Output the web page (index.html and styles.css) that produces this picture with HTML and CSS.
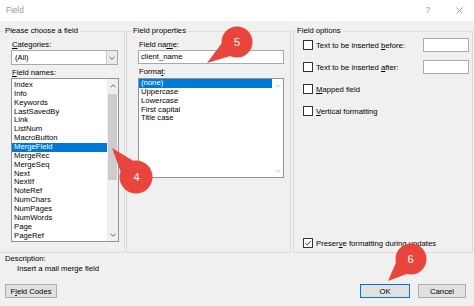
FILE: index.html
```html
<!DOCTYPE html>
<html>
<head>
<meta charset="utf-8">
<link rel="stylesheet" href="styles.css">
</head>
<body>
<div class="dialog">
  <div class="titlebar">
    <span class="title">Field</span>
    <span class="help">?</span>
    <span class="close"><svg width="7" height="7" viewBox="0 0 7 7"><path d="M0.5 0.5L6.5 6.5M6.5 0.5L0.5 6.5" stroke="#8a8a8a" stroke-width="0.8" fill="none"/></svg></span>
  </div>

  <div class="groups">
    <fieldset class="group g-left">
      <legend>Please choose a field</legend>
      <div class="label"><u>C</u>ategories:</div>
      <div class="combo">
        <span class="combo-text">(All)</span>
        <span class="combo-btn"><svg width="6" height="4" viewBox="0 0 6 4"><path d="M0.5 0.8L3 3.2L5.5 0.8" stroke="#555" stroke-width="0.9" fill="none"/></svg></span>
      </div>
      <div class="label gap-label"><u>F</u>ield names:</div>
      <div class="listbox names">
        <ul class="items pad">
          <li>Index</li>
          <li>Info</li>
          <li>Keywords</li>
          <li>LastSavedBy</li>
          <li>Link</li>
          <li>ListNum</li>
          <li>MacroButton</li>
          <li class="sel">MergeField</li>
          <li>MergeRec</li>
          <li>MergeSeq</li>
          <li>Next</li>
          <li>NextIf</li>
          <li>NoteRef</li>
          <li>NumChars</li>
          <li>NumPages</li>
          <li>NumWords</li>
          <li>Page</li>
          <li>PageRef</li>
        </ul>
        <div class="vscroll">
          <span class="arr"><svg width="6" height="4" viewBox="0 0 6 4"><path d="M0.5 3.2L3 0.8L5.5 3.2" stroke="#555" stroke-width="0.9" fill="none"/></svg></span>
          <span class="thumb"></span>
          <span class="spacer"></span>
          <span class="arr"><svg width="6" height="4" viewBox="0 0 6 4"><path d="M0.5 0.8L3 3.2L5.5 0.8" stroke="#555" stroke-width="0.9" fill="none"/></svg></span>
        </div>
      </div>
    </fieldset>

    <fieldset class="group g-mid">
      <legend>Field properties</legend>
      <div class="label">Field na<u>m</u>e:</div>
      <div class="textbox">client_name</div>
      <div class="label gap-label">Forma<u>t</u>:</div>
      <div class="listbox formats">
        <ul class="items">
          <li class="sel">(none)</li>
          <li>Uppercase</li>
          <li>Lowercase</li>
          <li>First capital</li>
          <li>Title case</li>
        </ul>
        <div class="vscroll light">
          <span class="arr"><svg width="6" height="4" viewBox="0 0 6 4"><path d="M0.5 3.2L3 0.8L5.5 3.2" stroke="#bcbcbc" stroke-width="0.9" fill="none"/></svg></span>
          <span class="spacer"></span>
          <span class="arr"><svg width="6" height="4" viewBox="0 0 6 4"><path d="M0.5 0.8L3 3.2L5.5 0.8" stroke="#bcbcbc" stroke-width="0.9" fill="none"/></svg></span>
        </div>
      </div>
    </fieldset>

    <fieldset class="group g-right">
      <legend>Field options</legend>
      <div class="opts">
        <div class="opt"><span class="cb"></span><span>Text to be inserted <u>b</u>efore:</span><span class="tb"></span></div>
        <div class="opt"><span class="cb"></span><span>Text to be inserted <u>a</u>fter:</span><span class="tb"></span></div>
        <div class="opt"><span class="cb"></span><span><u>M</u>apped field</span></div>
        <div class="opt"><span class="cb"></span><span><u>V</u>ertical formatting</span></div>
        <div class="opt last"><span class="cb"><svg width="8" height="8" viewBox="0 0 8 8"><path d="M1.3 4.2L3.2 6L6.8 1.8" stroke="#333" stroke-width="0.9" fill="none"/></svg></span><span>Preser<u>v</u>e formatting during updates</span></div>
      </div>
    </fieldset>
  </div>

  <div class="desc">Description:</div>
  <div class="desc-text">Insert a mail merge field</div>

  <div class="footer">
    <div class="btn codes">F<u>i</u>eld Codes</div>
    <div class="btn ok">OK</div>
    <div class="btn cancel">Cancel</div>
  </div>

  <svg class="callouts" width="474" height="306" viewBox="0 0 474 306">
    <g fill="#e8463d">
      <path d="M120.5 171.2L112 148L133.2 160.7Z"/>
      <circle cx="136" cy="177" r="16.5"/>
      <path d="M230.4 56L207 63L221.6 43.4Z"/>
      <circle cx="237" cy="42" r="15.5"/>
      <path d="M406.6 273.9L388 281L395.9 262.7Z"/>
      <circle cx="411" cy="259" r="15.5"/>
    </g>
    <g fill="#fff" font-family="Liberation Sans, Arial, sans-serif" font-size="11" text-anchor="middle">
      <text x="136.5" y="181">4</text>
      <text x="237" y="46">5</text>
      <text x="410.5" y="263">6</text>
    </g>
  </svg>
</div>
</body>
</html>
```

FILE: styles.css
```css
html, body {
  margin: 0;
  padding: 0;
}

body {
  width: 474px;
  height: 306px;
  overflow: hidden;
  background: #f0f0f0;
  font-family: "Liberation Sans", Arial, sans-serif;
  font-size: 7.7px;
  color: #000;
}

.dialog {
  position: relative;
  height: 306px;
  display: flex;
  flex-direction: column;
}

.titlebar {
  height: 21px;
  background: #fff;
  display: flex;
  align-items: center;
  color: #9a9a9a;
  font-size: 8.2px;
}

.title {
  margin-left: 6px;
}

.help {
  margin-left: auto;
}

.close {
  display: flex;
  margin-left: 26px;
  margin-right: 11px;
}

.groups {
  display: flex;
  padding-top: 5px;
}

.group {
  margin: 0;
  min-width: 0;
  box-sizing: border-box;
  height: 227px;
  border: 1px solid #dcdcdc;
  padding: 4px 0 0 11px;
}

.group legend {
  padding: 0 2px;
  height: 10px;
  line-height: 10px;
}

.g-left {
  width: 125px;
  border-left: none;
}

.g-left legend {
  margin-left: -8px;
}

.g-mid {
  width: 165px;
  margin-left: 1px;
}

.g-mid legend {
  margin-left: -7px;
}

.g-right {
  width: 180px;
  margin-left: 2px;
  padding: 0 3px 0 9px;
}

.g-right legend {
  margin-left: -8px;
}

.label {
  line-height: 10px;
  height: 10px;
  padding-left: 1px;
}

.gap-label {
  margin-top: 3px;
}

.combo {
  width: 107px;
  height: 15px;
  box-sizing: border-box;
  border: 1px solid #a9a9a9;
  background: #fff;
  display: flex;
}

.combo-text {
  flex: 1;
  padding-left: 3px;
  line-height: 13px;
}

.combo-btn {
  width: 11px;
  box-sizing: border-box;
  border-left: 1px solid #c9c9c9;
  background: #ececec;
  display: flex;
  align-items: center;
  justify-content: center;
}

.listbox {
  box-sizing: border-box;
  border: 1px solid #8f939a;
  background: #fff;
  display: flex;
}

.names {
  width: 108px;
  height: 164px;
}

.formats {
  width: 146px;
  height: 100px;
  margin-top: 1px;
}

.items {
  flex: 1;
  list-style: none;
  margin: 0;
  padding: 0;
  min-width: 0;
}

.items.pad {
  padding-top: 2px;
}

.items li {
  height: 8.87px;
  line-height: 8.87px;
  padding-left: 2px;
  white-space: nowrap;
}

.items li.sel {
  background: #0078d7;
  color: #fff;
}

.vscroll {
  width: 11px;
  background: #f0f0f0;
  display: flex;
  flex-direction: column;
}

.vscroll.light {
  background: #fff;
}

.arr {
  height: 13px;
  display: flex;
  align-items: center;
  justify-content: center;
}

.thumb {
  height: 86px;
  margin: 2px 1px 0;
  background: #cdcdcd;
}

.spacer {
  flex: 1;
}

.textbox {
  width: 146px;
  height: 14px;
  box-sizing: border-box;
  border: 1px solid #a9a9a9;
  background: #fff;
  padding-left: 2px;
  line-height: 12px;
}

.opts {
  display: flex;
  flex-direction: column;
  gap: 4px;
  height: 216px;
}

.opt {
  display: flex;
  align-items: center;
  height: 18px;
}

.opt.last {
  margin-top: auto;
}

.cb {
  width: 10px;
  height: 10px;
  box-sizing: border-box;
  border: 1px solid #333;
  background: #fff;
  margin-right: 3px;
  display: flex;
  align-items: center;
  justify-content: center;
}

.tb {
  margin-left: auto;
  width: 46px;
  height: 14px;
  box-sizing: border-box;
  border: 1px solid #a9a9a9;
  background: #fff;
}

.desc {
  margin-top: 1px;
  padding-left: 5px;
  line-height: 10px;
}

.desc-text {
  padding-left: 17px;
  line-height: 10px;
}

.footer {
  margin-top: 10px;
  display: flex;
  padding: 0 8px 0 5px;
}

.btn {
  height: 14px;
  box-sizing: border-box;
  border: 1px solid #adadad;
  background: #e1e1e1;
  display: flex;
  align-items: center;
  justify-content: center;
}

.codes {
  width: 52px;
}

.ok {
  margin-left: auto;
  width: 50px;
  border: 1px solid #0078d7;
}

.cancel {
  margin-left: 8px;
  width: 48px;
}

.callouts {
  position: absolute;
  left: 0;
  top: 0;
  pointer-events: none;
}
```
